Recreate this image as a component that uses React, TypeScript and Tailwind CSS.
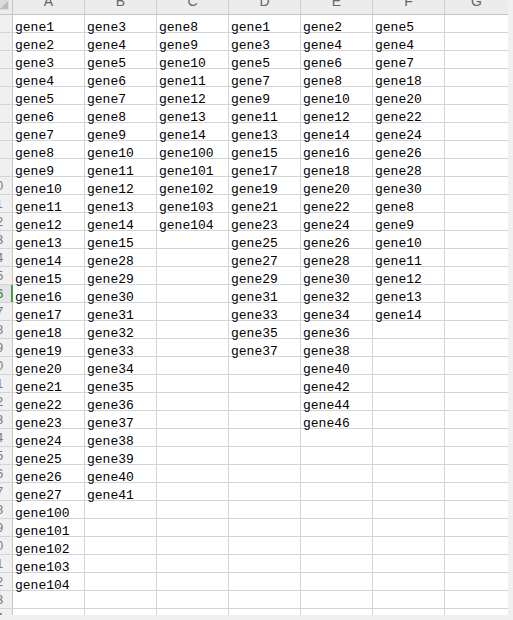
const range = (a: number, b: number, step = 1) => {
    const out: string[] = [];
    for (let i = a; i <= b; i += step) out.push(`gene${i}`);
    return out;
};

const columns: string[][] = [
    [...range(1, 27), ...range(100, 104)],
    [...range(3, 15), ...range(28, 41)],
    [...range(8, 14), ...range(100, 104)],
    range(1, 37, 2),
    range(2, 46, 2),
    ["gene5", "gene4", "gene7", ...range(18, 30, 2), ...range(8, 14)],
];

const letters = ["A", "B", "C", "D", "E", "F"];
const rowCount = 34;
const activeRow = 16;

export default function App() {
    return (
        <div className="h-[620px] w-[513px] overflow-hidden bg-[#f0f0f0]">
            <div className="h-[615px] w-[508px] overflow-hidden bg-white font-['Liberation_Mono',monospace] text-[13px] text-black">
                <HeaderRow />
                {Array.from({length: rowCount}, (_, i) => (
                    <Row key={i} index={i} />
                ))}
            </div>
        </div>
    );
}

function HeaderRow() {
    return (
        <div className="flex h-[15px] overflow-hidden border-b border-[#c6c6c6] bg-[#ececec] font-['Liberation_Sans',sans-serif] text-[14px] leading-[14px] text-[#666666]">
            <div className="w-[13px] shrink-0 border-r border-[#c6c6c6]">
                <svg width="9" height="10" viewBox="0 0 9 10">
                    <rect x="0" y="0" width="9" height="10" fill="#dcdcdc" />
                    <polygon points="8,1 8,9 0,9" fill="#bdbdbd" />
                </svg>
            </div>
            {letters.map((l) => (
                <div
                    key={l}
                    className="w-[72px] shrink-0 border-r border-[#d0d0d0] text-center"
                >
                    <div className="mt-[-6px]">{l}</div>
                </div>
            ))}
            <div className="flex-1 text-center">
                <div className="mt-[-6px]">G</div>
            </div>
        </div>
    );
}

function Row({index}: {index: number}) {
    const n = index + 1;
    const active = n === activeRow;
    return (
        <div className="flex h-[18px] border-b border-[#d4d4d4]">
            <div
                className={
                    active
                        ? "flex w-[13px] shrink-0 justify-start overflow-hidden border-r-2 border-[#3f9f4f] bg-[#e4e4e4]"
                        : "flex w-[13px] shrink-0 justify-start overflow-hidden border-r border-[#c6c6c6] bg-[#f0f0f0]"
                }
            >
                <div
                    className={
                        active
                            ? "ml-[-19px] w-[30px] shrink-0 pt-[2px] text-center font-['Liberation_Sans',sans-serif] text-[13px] leading-[14px] text-[#2f7d3c]"
                            : "ml-[-19px] w-[30px] shrink-0 pt-[2px] text-center font-['Liberation_Sans',sans-serif] text-[13px] leading-[14px] text-[#7a7a7a]"
                    }
                >
                    {n}
                </div>
            </div>
            {columns.map((col, c) => (
                <div
                    key={c}
                    className="w-[72px] shrink-0 border-r border-[#d4d4d4] pl-[2px] pt-[6px] leading-[13px] whitespace-nowrap"
                >
                    {col[index] ?? ""}
                </div>
            ))}
            <div className="flex-1" />
        </div>
    );
}
